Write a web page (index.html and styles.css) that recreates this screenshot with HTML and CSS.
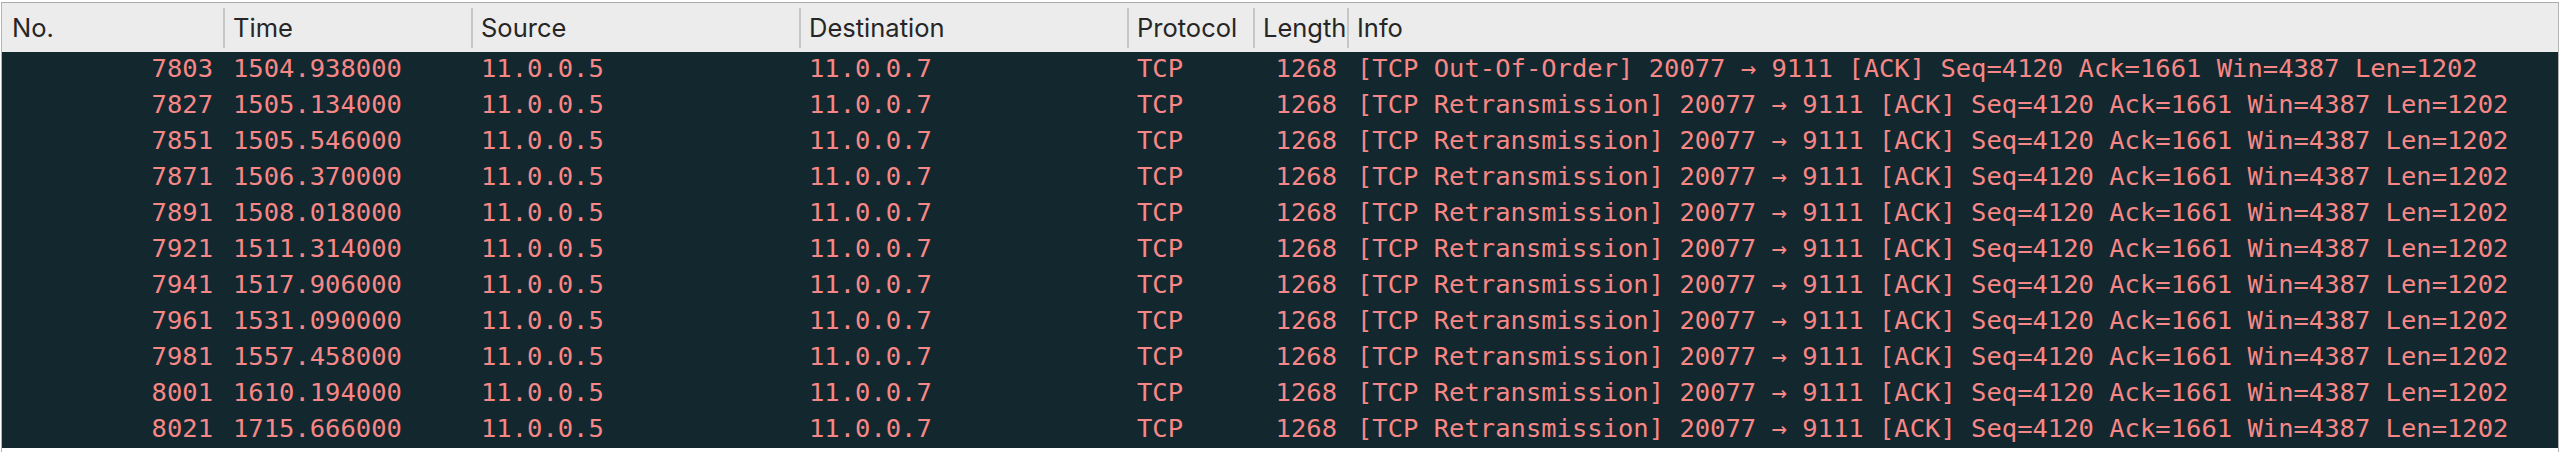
FILE: index.html
```html
<!DOCTYPE html>
<html>
<head>
<meta charset="utf-8">
<link rel="stylesheet" href="styles.css">
</head>
<body>
<div class="panel">
  <div class="head">
    <div class="hc first">No.</div>
    <div class="hc">Time</div>
    <div class="hc">Source</div>
    <div class="hc">Destination</div>
    <div class="hc">Protocol</div>
    <div class="hc">Length</div>
    <div class="hc">Info</div>
  </div>
  <div class="rows">
    <div class="row"><span class="num">7803</span><span>1504.938000</span><span>11.0.0.5</span><span>11.0.0.7</span><span>TCP</span><span class="num">1268</span><span class="info">[TCP Out-Of-Order] 20077 → 9111 [ACK] Seq=4120 Ack=1661 Win=4387 Len=1202</span></div>
    <div class="row"><span class="num">7827</span><span>1505.134000</span><span>11.0.0.5</span><span>11.0.0.7</span><span>TCP</span><span class="num">1268</span><span class="info">[TCP Retransmission] 20077 → 9111 [ACK] Seq=4120 Ack=1661 Win=4387 Len=1202</span></div>
    <div class="row"><span class="num">7851</span><span>1505.546000</span><span>11.0.0.5</span><span>11.0.0.7</span><span>TCP</span><span class="num">1268</span><span class="info">[TCP Retransmission] 20077 → 9111 [ACK] Seq=4120 Ack=1661 Win=4387 Len=1202</span></div>
    <div class="row"><span class="num">7871</span><span>1506.370000</span><span>11.0.0.5</span><span>11.0.0.7</span><span>TCP</span><span class="num">1268</span><span class="info">[TCP Retransmission] 20077 → 9111 [ACK] Seq=4120 Ack=1661 Win=4387 Len=1202</span></div>
    <div class="row"><span class="num">7891</span><span>1508.018000</span><span>11.0.0.5</span><span>11.0.0.7</span><span>TCP</span><span class="num">1268</span><span class="info">[TCP Retransmission] 20077 → 9111 [ACK] Seq=4120 Ack=1661 Win=4387 Len=1202</span></div>
    <div class="row"><span class="num">7921</span><span>1511.314000</span><span>11.0.0.5</span><span>11.0.0.7</span><span>TCP</span><span class="num">1268</span><span class="info">[TCP Retransmission] 20077 → 9111 [ACK] Seq=4120 Ack=1661 Win=4387 Len=1202</span></div>
    <div class="row"><span class="num">7941</span><span>1517.906000</span><span>11.0.0.5</span><span>11.0.0.7</span><span>TCP</span><span class="num">1268</span><span class="info">[TCP Retransmission] 20077 → 9111 [ACK] Seq=4120 Ack=1661 Win=4387 Len=1202</span></div>
    <div class="row"><span class="num">7961</span><span>1531.090000</span><span>11.0.0.5</span><span>11.0.0.7</span><span>TCP</span><span class="num">1268</span><span class="info">[TCP Retransmission] 20077 → 9111 [ACK] Seq=4120 Ack=1661 Win=4387 Len=1202</span></div>
    <div class="row"><span class="num">7981</span><span>1557.458000</span><span>11.0.0.5</span><span>11.0.0.7</span><span>TCP</span><span class="num">1268</span><span class="info">[TCP Retransmission] 20077 → 9111 [ACK] Seq=4120 Ack=1661 Win=4387 Len=1202</span></div>
    <div class="row"><span class="num">8001</span><span>1610.194000</span><span>11.0.0.5</span><span>11.0.0.7</span><span>TCP</span><span class="num">1268</span><span class="info">[TCP Retransmission] 20077 → 9111 [ACK] Seq=4120 Ack=1661 Win=4387 Len=1202</span></div>
    <div class="row"><span class="num">8021</span><span>1715.666000</span><span>11.0.0.5</span><span>11.0.0.7</span><span>TCP</span><span class="num">1268</span><span class="info">[TCP Retransmission] 20077 → 9111 [ACK] Seq=4120 Ack=1661 Win=4387 Len=1202</span></div>
  </div>
</div>
</body>
</html>
```

FILE: styles.css
```css
html, body {
  margin: 0;
  padding: 0;
  background: #ffffff;
}
.panel {
  margin: 2px 1px 0 1px;
  border-top: 1px solid #a9a9a9;
  border-left: 1px solid #b4b4b4;
  border-right: 1px solid #b4b4b4;
  height: 450px;
  box-sizing: border-box;
  overflow: hidden;
}
.head, .row {
  display: grid;
  grid-template-columns: 221px 248px 328px 328px 126px 94px 1fr;
}
.head {
  height: 49px;
  background: #ececec;
  align-items: center;
  font-family: Inter, "Liberation Sans", sans-serif;
  font-size: 25.5px;
  color: #262626;
}
.hc {
  height: 40px;
  line-height: 40px;
  border-left: 2px solid #c6c6c6;
  padding-left: 8px;
  padding-right: 11px;
  white-space: nowrap;
  overflow: hidden;
}
.hc.first {
  border-left: none;
  padding-left: 10px;
}
.rows {
  background: #12272e;
  color: #f78787;
  font-family: "DejaVu Sans Mono", monospace;
  font-size: 25.5px;
}
.row {
  height: 36px;
  line-height: 32px;
  padding-bottom: 4px;
  box-sizing: border-box;
  white-space: nowrap;
}
.row span {
  padding-left: 10px;
  overflow: hidden;
}
.row span.num {
  text-align: right;
  padding-left: 0;
  padding-right: 10px;
}
.row span.info {
  overflow: visible;
}
```
